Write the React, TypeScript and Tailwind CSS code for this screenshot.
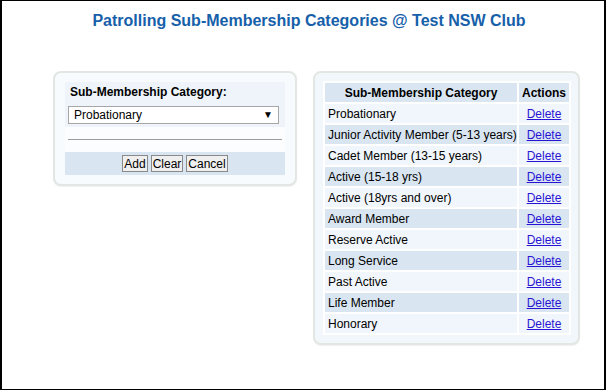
const categories = [
  "Probationary",
  "Junior Activity Member (5-13 years)",
  "Cadet Member (13-15 years)",
  "Active (15-18 yrs)",
  "Active (18yrs and over)",
  "Award Member",
  "Reserve Active",
  "Long Service",
  "Past Active",
  "Life Member",
  "Honorary",
];

function EditPanel() {
  return (
    <div className="w-[244px] rounded-[8px] border-2 border-[#e3e7e3] bg-[#f8fbfd] px-[10px] py-[9px] shadow-[0_1px_1px_rgba(0,0,0,0.06)]">
      <div className="bg-[#eef4fa]">
        <div className="flex h-[20px] items-center pl-[5px] font-bold">
          Sub-Membership Category:
        </div>
        <div className="flex h-[25px] items-center px-[3px]">
          <div className="flex h-[18px] w-[211px] items-center justify-between border border-[#a6a6a6] bg-white pl-[5px] pr-[5px]">
            <span>Probationary</span>
            <span className="text-[10px] leading-none">▼</span>
          </div>
        </div>
      </div>
      <div className="flex h-[25px] items-center bg-[#fbfdfe] px-[3px]">
        <div className="w-full border-t border-[#9c9c9c]" />
      </div>
      <div className="flex h-[23px] items-center justify-center gap-[3px] bg-[#d9e6f2]">
        {["Add", "Clear", "Cancel"].map((label) => (
          <button
            key={label}
            className="h-[17px] border border-[#8a8a8a] bg-[#efefef] px-[1px] leading-none"
          >
            {label}
          </button>
        ))}
      </div>
    </div>
  );
}

function CategoryTable() {
  return (
    <div className="w-[267px] rounded-[8px] border-2 border-[#e3e7e3] bg-[#f2f7fb] p-[8px] shadow-[0_1px_1px_rgba(0,0,0,0.06)]">
      <table className="w-[248px] border-separate border-spacing-[2px] bg-white">
        <thead>
          <tr>
            <th className="h-[19px] w-[192px] bg-[#d9e6f2] p-0 text-center font-bold">
              Sub-Membership Category
            </th>
            <th className="h-[19px] bg-[#d9e6f2] p-0 text-center font-bold">
              Actions
            </th>
          </tr>
        </thead>
        <tbody>
          {categories.map((name, i) => {
            const bg = i % 2 === 0 ? "bg-[#f0f6fb]" : "bg-[#d9e6f2]";
            return (
              <tr key={name}>
                <td className={`h-[19px] p-0 pl-[3px] ${bg}`}>{name}</td>
                <td className={`h-[19px] p-0 text-center ${bg}`}>
                  <a href="#" className="text-[#2a14d4] underline">
                    Delete
                  </a>
                </td>
              </tr>
            );
          })}
        </tbody>
      </table>
    </div>
  );
}

export default function App() {
  return (
    <div
      className="h-[390px] w-[606px] border-x-2 border-y border-black bg-white text-[12px] leading-[14px] text-black"
      style={{ fontFamily: '"Liberation Sans", Arial, sans-serif' }}
    >
      <h1 className="pl-[12px] pt-[11px] text-center text-[16px] font-bold leading-[18px] text-[#1660aa]">
        Patrolling Sub-Membership Categories @ Test NSW Club
      </h1>
      <div className="mt-[41px] flex items-start gap-[16px] pl-[51px]">
        <EditPanel />
        <CategoryTable />
      </div>
    </div>
  );
}
